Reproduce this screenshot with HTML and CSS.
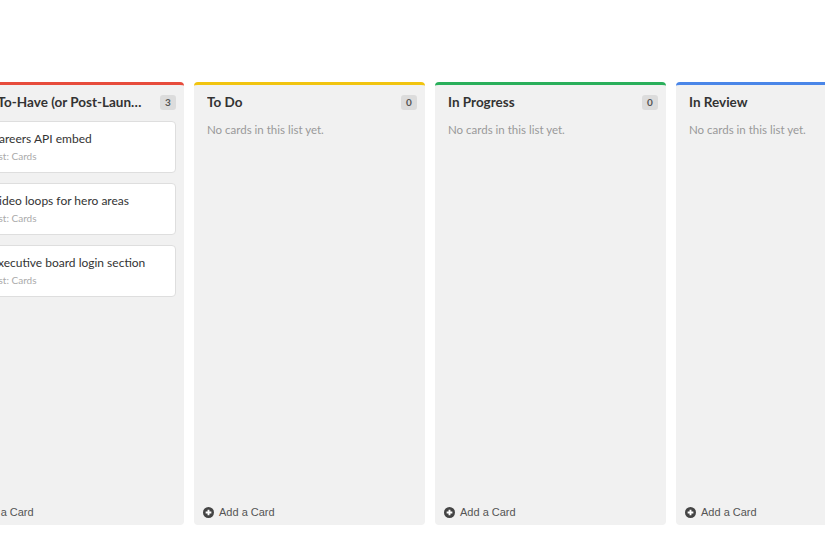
FILE: index.html
```html
<!DOCTYPE html>
<html>
<head>
<meta charset="utf-8">
<link rel="stylesheet" href="styles.css">
</head>
<body>
<div class="viewport">
  <div class="board">
    <section class="list list-red">
      <header class="list-head">
        <span class="list-title">Nice-To-Have (or Post-Launch)</span>
        <span class="badge">3</span>
      </header>
      <div class="cards">
        <div class="card">
          <div class="card-title">Careers API embed</div>
          <div class="card-meta">List: Cards</div>
        </div>
        <div class="card">
          <div class="card-title">Video loops for hero areas</div>
          <div class="card-meta">List: Cards</div>
        </div>
        <div class="card">
          <div class="card-title">Executive board login section</div>
          <div class="card-meta">List: Cards</div>
        </div>
      </div>
      <footer class="add-card">
        <svg class="plus" width="11" height="11" viewBox="0 0 10 10"><circle cx="5" cy="5" r="5" fill="#444"/><path d="M5 2.4v5.2M2.4 5h5.2" stroke="#fff" stroke-width="1.7"/></svg>
        <span>Add a Card</span>
      </footer>
    </section>
    <section class="list list-yellow">
      <header class="list-head">
        <span class="list-title">To Do</span>
        <span class="badge">0</span>
      </header>
      <div class="cards">
        <p class="empty">No cards in this list yet.</p>
      </div>
      <footer class="add-card">
        <svg class="plus" width="11" height="11" viewBox="0 0 10 10"><circle cx="5" cy="5" r="5" fill="#444"/><path d="M5 2.4v5.2M2.4 5h5.2" stroke="#fff" stroke-width="1.7"/></svg>
        <span>Add a Card</span>
      </footer>
    </section>
    <section class="list list-green">
      <header class="list-head">
        <span class="list-title">In Progress</span>
        <span class="badge">0</span>
      </header>
      <div class="cards">
        <p class="empty">No cards in this list yet.</p>
      </div>
      <footer class="add-card">
        <svg class="plus" width="11" height="11" viewBox="0 0 10 10"><circle cx="5" cy="5" r="5" fill="#444"/><path d="M5 2.4v5.2M2.4 5h5.2" stroke="#fff" stroke-width="1.7"/></svg>
        <span>Add a Card</span>
      </footer>
    </section>
    <section class="list list-blue">
      <header class="list-head">
        <span class="list-title">In Review</span>
        <span class="badge">0</span>
      </header>
      <div class="cards">
        <p class="empty">No cards in this list yet.</p>
      </div>
      <footer class="add-card">
        <svg class="plus" width="11" height="11" viewBox="0 0 10 10"><circle cx="5" cy="5" r="5" fill="#444"/><path d="M5 2.4v5.2M2.4 5h5.2" stroke="#fff" stroke-width="1.7"/></svg>
        <span>Add a Card</span>
      </footer>
    </section>
  </div>
</div>
</body>
</html>
```

FILE: styles.css
```css
html, body {
  margin: 0;
  padding: 0;
  background: #fff;
  font-family: Lato, "Liberation Sans", sans-serif;
  color: #333;
}

.viewport {
  width: 825px;
  height: 533px;
  overflow: hidden;
}

.board {
  display: flex;
  gap: 10px;
  padding-top: 82px;
  margin-left: -47px;
}

.list {
  flex: 0 0 auto;
  width: 231px;
  min-width: 0;
  box-sizing: border-box;
  height: 443px;
  background: #f1f1f1;
  border-top: 3px solid #ccc;
  border-radius: 4px;
  padding: 0 8px 0 9px;
  display: flex;
  flex-direction: column;
}

.list-red { border-top-color: #e74c3c; }
.list-yellow { border-top-color: #f1c40f; }
.list-green { border-top-color: #2aaf5b; }
.list-blue { border-top-color: #4a86e8; }

.list-head {
  display: flex;
  align-items: center;
  height: 34px;
  padding-left: 4px;
}

.list-title {
  flex: 1;
  min-width: 0;
  white-space: nowrap;
  overflow: hidden;
  text-overflow: ellipsis;
  font-size: 13.5px;
  font-weight: 700;
  color: #333;
  margin-right: 14px;
}

.badge {
  flex: 0 0 auto;
  width: 16px;
  height: 15px;
  line-height: 15px;
  text-align: center;
  background: #dcdcdc;
  border-radius: 3px;
  font-size: 10px;
  font-weight: 700;
  color: #555;
}

.cards {
  flex: 1;
  padding-top: 2px;
}

.empty {
  margin: 0;
  padding-left: 4px;
  font-size: 11.5px;
  line-height: 17px;
  color: #999;
}

.card {
  background: #fff;
  border: 1px solid #dedede;
  border-radius: 4px;
  padding: 9px 10px 9px 28px;
  margin-bottom: 10px;
}

.card-title {
  font-size: 12px;
  line-height: 16px;
  color: #333;
  white-space: nowrap;
}

.card-meta {
  margin-top: 2px;
  font-size: 10px;
  line-height: 14px;
  color: #aaa;
}

.add-card {
  height: 26px;
  display: flex;
  align-items: center;
  gap: 5px;
  font-family: "Liberation Sans", Arial, sans-serif;
  font-size: 11px;
  color: #555;
}

.plus {
  display: block;
}
```
